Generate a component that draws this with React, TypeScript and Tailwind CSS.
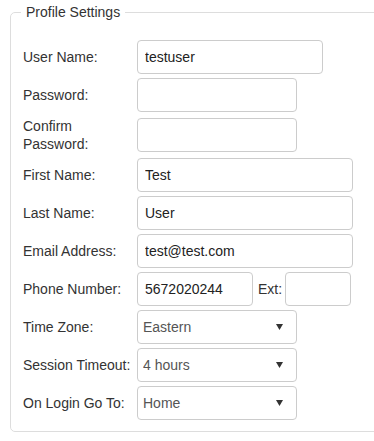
import React from "react";

/**
 * Profile settings fieldset — labelled rows of inputs and selects.
 */

const inputCls =
  "h-[34px] rounded-[4px] border border-[#cccccc] bg-white px-[7px] text-[14px] text-[#222] outline-none";

function Row({
  label,
  tall,
  children,
}: {
  label: React.ReactNode;
  tall?: boolean;
  children: React.ReactNode;
}) {
  return (
    <div className={`flex items-center ${tall ? "h-[38px]" : "h-[34px]"}`}>
      <label className="w-[114px] shrink-0 leading-[18px] text-[#333]">
        {label}
      </label>
      {children}
    </div>
  );
}

function Select({ value, options }: { value: string; options: string[] }) {
  return (
    <div className="relative w-[160px]">
      <select
        defaultValue={value}
        className="h-[34px] w-full appearance-none rounded-[4px] border border-[#cccccc] bg-white pl-[5px] pr-6 text-[14px] text-[#555] outline-none"
      >
        {options.map((o) => (
          <option key={o}>{o}</option>
        ))}
      </select>
      {/* dropdown caret */}
      <svg
        className="pointer-events-none absolute right-[14px] top-[14px]"
        width="7"
        height="6"
        viewBox="0 0 7 6"
        aria-hidden="true"
      >
        <path d="M0 0h7L3.5 6z" fill="#333" />
      </svg>
    </div>
  );
}

export default function App() {
  return (
    <div className="w-[374px] h-[441px] overflow-hidden bg-white font-['Liberation_Sans',Arial,sans-serif] text-[14px]">
      <fieldset className="ml-[10px] mt-[2px] w-[380px] rounded-[5px] border border-[#dddddd] pb-[11px] pl-3">
        <legend className="-ml-[2px] px-[5px] leading-5 text-[#333]">
          Profile Settings
        </legend>
        <div className="mt-[18px] flex flex-col gap-[4px]">
          <Row label="User Name:">
            <input className={`${inputCls} w-[186px]`} defaultValue="testuser" />
          </Row>
          <Row label="Password:">
            <input type="password" className={`${inputCls} w-[160px]`} />
          </Row>
          <Row
            tall
            label={
              <>
                Confirm
                <br />
                Password:
              </>
            }
          >
            <input type="password" className={`${inputCls} w-[160px]`} />
          </Row>
          <Row label="First Name:">
            <input className={`${inputCls} w-[216px]`} defaultValue="Test" />
          </Row>
          <Row label="Last Name:">
            <input className={`${inputCls} w-[216px]`} defaultValue="User" />
          </Row>
          <Row label="Email Address:">
            <input
              className={`${inputCls} w-[216px]`}
              defaultValue="test@test.com"
            />
          </Row>
          <Row label="Phone Number:">
            <input
              className={`${inputCls} w-[116px]`}
              defaultValue="5672020244"
            />
            <span className="ml-[5px] mr-[3px] text-[#333]">Ext:</span>
            <input className={`${inputCls} w-[66px]`} />
          </Row>
          <Row label="Time Zone:">
            <Select
              value="Eastern"
              options={["Eastern", "Central", "Mountain", "Pacific"]}
            />
          </Row>
          <Row label="Session Timeout:">
            <Select
              value="4 hours"
              options={["1 hour", "2 hours", "4 hours", "8 hours"]}
            />
          </Row>
          <Row label="On Login Go To:">
            <Select value="Home" options={["Home", "Dashboard", "Reports"]} />
          </Row>
        </div>
      </fieldset>
    </div>
  );
}
